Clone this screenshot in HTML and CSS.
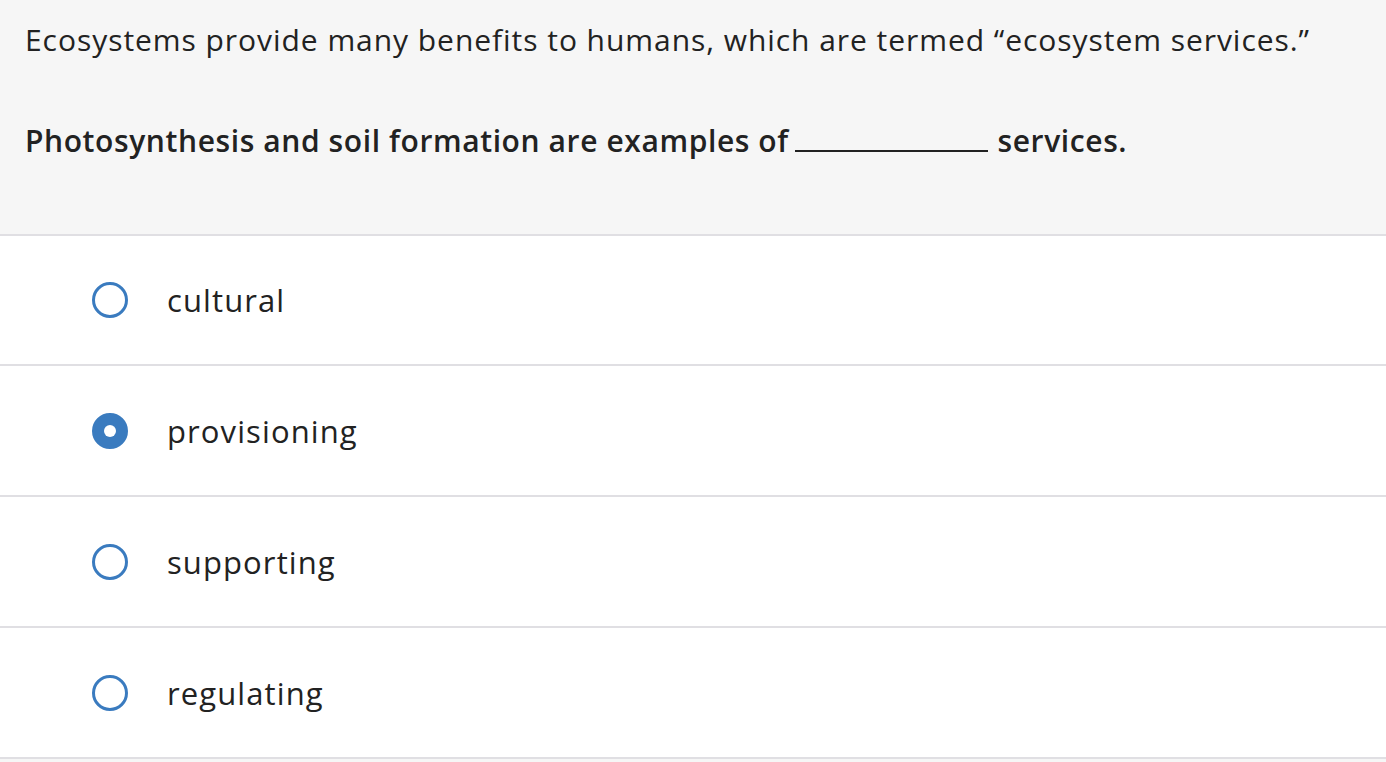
FILE: index.html
```html
<!DOCTYPE html>
<html>
<head>
<meta charset="utf-8">
<link rel="stylesheet" href="styles.css">
</head>
<body>
<div class="question">
  <p class="intro">Ecosystems provide many benefits to humans, which are termed “ecosystem services.”</p>
  <p class="prompt">Photosynthesis and soil formation are examples of <span class="blank"></span> services.</p>
</div>
<ul class="choices">
  <li class="choice"><span class="radio"></span><span class="label">cultural</span></li>
  <li class="choice"><span class="radio checked"></span><span class="label">provisioning</span></li>
  <li class="choice"><span class="radio"></span><span class="label">supporting</span></li>
  <li class="choice"><span class="radio"></span><span class="label">regulating</span></li>
</ul>
</body>
</html>
```
FILE: styles.css
```css
html, body {
  margin: 0;
  padding: 0;
}
body {
  background: #f6f6f6;
  font-family: "Open Sans", Lato, sans-serif;
  color: #222222;
  width: 1386px;
}
.question {
  background: #f6f6f6;
  padding: 20px 25px 0 25px;
  height: 214px;
}
.intro {
  margin: 0;
  font-size: 30px;
  line-height: 40px;
  letter-spacing: 0.95px;
}
.prompt {
  margin: 61px 0 0 0;
  font-size: 30px;
  line-height: 40px;
  font-weight: 600;
  letter-spacing: 0.6px;
}
.blank {
  display: inline-block;
  width: 193px;
  border-bottom: 2px solid #222;
  margin: 0 1px 0 -2px;
}
.choices {
  list-style: none;
  margin: 0;
  padding: 0;
  background: #ffffff;
  border-bottom: 2px solid #e0dfe3;
}
.choice {
  height: 129px;
  border-top: 2px solid #e0dfe3;
  display: flex;
  align-items: center;
  padding-left: 92px;
}
.choice:first-child {
  height: 128px;
}
.radio {
  box-sizing: border-box;
  width: 36px;
  height: 36px;
  border-radius: 50%;
  border: 3px solid #3a7bbf;
  background: #fff;
  flex: none;
  display: flex;
  align-items: center;
  justify-content: center;
}
.radio.checked {
  background: #3a7bbf;
}
.radio.checked::after {
  content: "";
  width: 12px;
  height: 12px;
  border-radius: 50%;
  background: #fff;
}
.label {
  margin-left: 39px;
  font-size: 31px;
  line-height: 40px;
  letter-spacing: 1.1px;
}
```
